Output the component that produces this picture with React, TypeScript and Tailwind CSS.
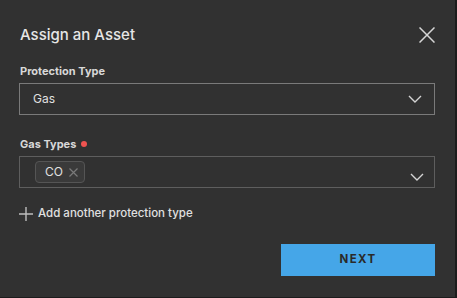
function Chevron({ className = '' }: { className?: string }) {
  return (
    <svg width="14" height="8" viewBox="0 0 14 8" className={className} fill="none">
      <path d="M1 1l6 6 6-6" stroke="#d4d4d4" strokeWidth="1.4" />
    </svg>
  );
}

function Cross({ size, color, width = 1.4 }: { size: number; color: string; width?: number }) {
  return (
    <svg width={size} height={size} viewBox={`0 0 ${size} ${size}`} fill="none">
      <path d={`M0.5 0.5L${size - 0.5} ${size - 0.5}M${size - 0.5} 0.5L0.5 ${size - 0.5}`} stroke={color} strokeWidth={width} />
    </svg>
  );
}

export default function App() {
  return (
    <div className="w-[457px] h-[298px] bg-[#1c1c1c] font-['Inter',sans-serif]">
      <div className="w-[455px] h-[297px] bg-[#313131] pl-[19px] pr-[20px] pt-[25px] text-[#e6e6e6]">
        {/* Header */}
        <div className="flex items-center justify-between h-[20px]">
          <h1 className="text-[15px] font-medium leading-[20px] pl-px">Assign an Asset</h1>
          <Cross size={16} color="#d6d6d6" width={1.5} />
        </div>

        {/* Protection type */}
        <label className="block mt-[19px] text-[11px] leading-[14px] font-bold text-[#d8d8d8] pl-px">
          Protection Type
        </label>
        <div className="mt-[5px] h-[32px] border border-[#7a7a7a] flex items-center justify-between pl-[13px] pr-[12px]">
          <span className="text-[12px] text-[#e0e0e0]">Gas</span>
          <Chevron />
        </div>

        {/* Gas types */}
        <label className="flex items-center gap-[5px] mt-[22px] text-[11px] leading-[14px] font-bold text-[#d8d8d8] pl-px">
          Gas Types
          <span className="w-[6px] h-[6px] rounded-full bg-[#ef5350]" />
        </label>
        <div className="mt-[5px] h-[32px] border border-[#5e5e5e] flex items-center justify-between pl-[15px] pr-[10px]">
          <span className="flex items-center gap-[6px] h-[22px] pl-[9px] pr-[6px] rounded-[4px] border border-[#555] bg-[#3a3a3a] text-[12px] text-[#e0e0e0]">
            CO
            <Cross size={9} color="#7a7a7a" width={1.2} />
          </span>
          <Chevron className="mt-[9px]" />
        </div>

        {/* Add another */}
        <div className="flex items-center gap-[5px] mt-[18px] h-[16px] text-[11.5px] font-medium text-[#e0e0e0]">
          <svg width="14" height="14" viewBox="0 0 14 14" fill="none">
            <path d="M7 0v14M0 7h14" stroke="#bdbdbd" strokeWidth="1.4" />
          </svg>
          Add another protection type
        </div>

        {/* Footer */}
        <div className="flex justify-end mt-[22px]">
          <button className="w-[154px] h-[32px] bg-[#45a6e8] text-[#2a2a2a] text-[11.5px] font-bold tracking-[0.12em]">
            NEXT
          </button>
        </div>
      </div>
    </div>
  );
}
